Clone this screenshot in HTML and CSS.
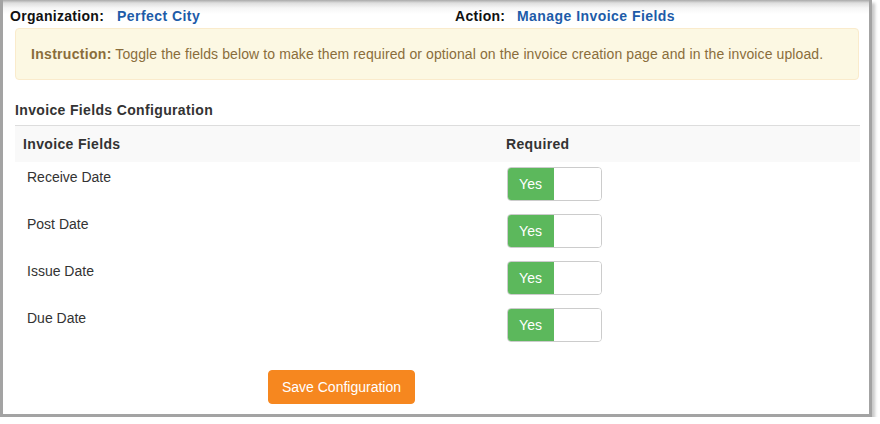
FILE: index.html
```html
<!DOCTYPE html>
<html>
<head>
<meta charset="utf-8">
<link rel="stylesheet" href="styles.css">
</head>
<body>
<div class="frame">
  <div class="meta">
    <div class="meta-item meta-org">
      <span class="meta-label org-label">Organization:</span>
      <span class="meta-value">Perfect City</span>
    </div>
    <div class="meta-item">
      <span class="meta-label act-label">Action:</span>
      <span class="meta-value">Manage Invoice Fields</span>
    </div>
  </div>
  <div class="alert"><strong>Instruction:</strong> Toggle the fields below to make them required or optional on the invoice creation page and in the invoice upload.</div>
  <div class="section-title">Invoice Fields Configuration</div>
  <div class="table">
    <div class="thead">
      <div class="th">Invoice Fields</div>
      <div class="th">Required</div>
    </div>
    <div class="tr">
      <div class="td-label">Receive Date</div>
      <div class="td-toggle"><div class="toggle"><span class="on">Yes</span><span class="off"></span></div></div>
    </div>
    <div class="tr">
      <div class="td-label">Post Date</div>
      <div class="td-toggle"><div class="toggle"><span class="on">Yes</span><span class="off"></span></div></div>
    </div>
    <div class="tr">
      <div class="td-label">Issue Date</div>
      <div class="td-toggle"><div class="toggle"><span class="on">Yes</span><span class="off"></span></div></div>
    </div>
    <div class="tr">
      <div class="td-label">Due Date</div>
      <div class="td-toggle"><div class="toggle"><span class="on">Yes</span><span class="off"></span></div></div>
    </div>
  </div>
  <div class="actions"><button class="btn-save">Save Configuration</button></div>
</div>
</body>
</html>
```
FILE: styles.css
```css
html, body {
  margin: 0;
  padding: 0;
  background: #fff;
}
body {
  font-family: "Liberation Sans", Arial, sans-serif;
  font-size: 14px;
  line-height: 20px;
  color: #333;
}
.frame {
  width: 866px;
  height: 414px;
  border-left: 3px solid #a3a3a3;
  border-right: 3px solid #a3a3a3;
  border-bottom: 3px solid #a3a3a3;
  box-shadow: 3px 3px 3px rgba(0,0,0,0.22);
  background: linear-gradient(to bottom, #a9a9a9 0px, #dedede 3px, #f6f6f6 8px, #fff 14px);
  box-sizing: content-box;
}
.meta {
  display: flex;
  padding: 6px 0 0 7px;
}
.meta-item {
  display: flex;
  font-weight: bold;
  letter-spacing: 0.3px;
}
.meta-org {
  width: 445px;
}
.meta-label {
  color: #111;
}
.org-label { width: 107px; }
.act-label { width: 62px; }
.meta-value {
  color: #1d5ba8;
  letter-spacing: 0.45px;
}
.alert {
  margin: 2px 10px 0 12px;
  padding: 15px 15px;
  background: #fcf8e3;
  border: 1px solid #faebcc;
  border-radius: 4px;
  color: #8a6d3b;
  letter-spacing: 0.1px;
}
.alert strong {
  font-weight: bold;
  letter-spacing: 0.3px;
}
.section-title {
  margin: 20px 0 0 12px;
  font-weight: bold;
  color: #333;
  letter-spacing: 0.35px;
}
.table {
  margin: 5px 9px 0 12px;
  border-top: 1px solid #ddd;
}
.thead, .tr {
  display: grid;
  grid-template-columns: 483px 1fr;
}
.thead {
  background: #f9f9f9;
}
.th {
  padding: 8px;
  font-weight: bold;
  color: #333;
  letter-spacing: 0.35px;
}
.td-label {
  padding: 5px 0 8px 12px;
}
.td-toggle {
  padding: 5px 0 8px 9px;
}
.toggle {
  display: flex;
  width: 95px;
  height: 34px;
  box-sizing: border-box;
  border: 1px solid #ccc;
  border-radius: 4px;
  overflow: hidden;
}
.toggle .on {
  width: 47px;
  height: 34px;
  margin: -1px 0 -1px -1px;
  background: #5cb85c;
  color: #fff;
  text-align: center;
  line-height: 34px;
  border-radius: 4px 0 0 4px;
}
.toggle .off {
  flex: 1;
  background: #fff;
}
.actions {
  padding: 20px 0 0 265px;
}
.btn-save {
  width: 147px;
  height: 34px;
  background: #f6871f;
  border: 1px solid #f6871f;
  border-radius: 4px;
  color: #fff;
  font-family: "Liberation Sans", Arial, sans-serif;
  font-size: 14px;
  padding: 0;
}
```
